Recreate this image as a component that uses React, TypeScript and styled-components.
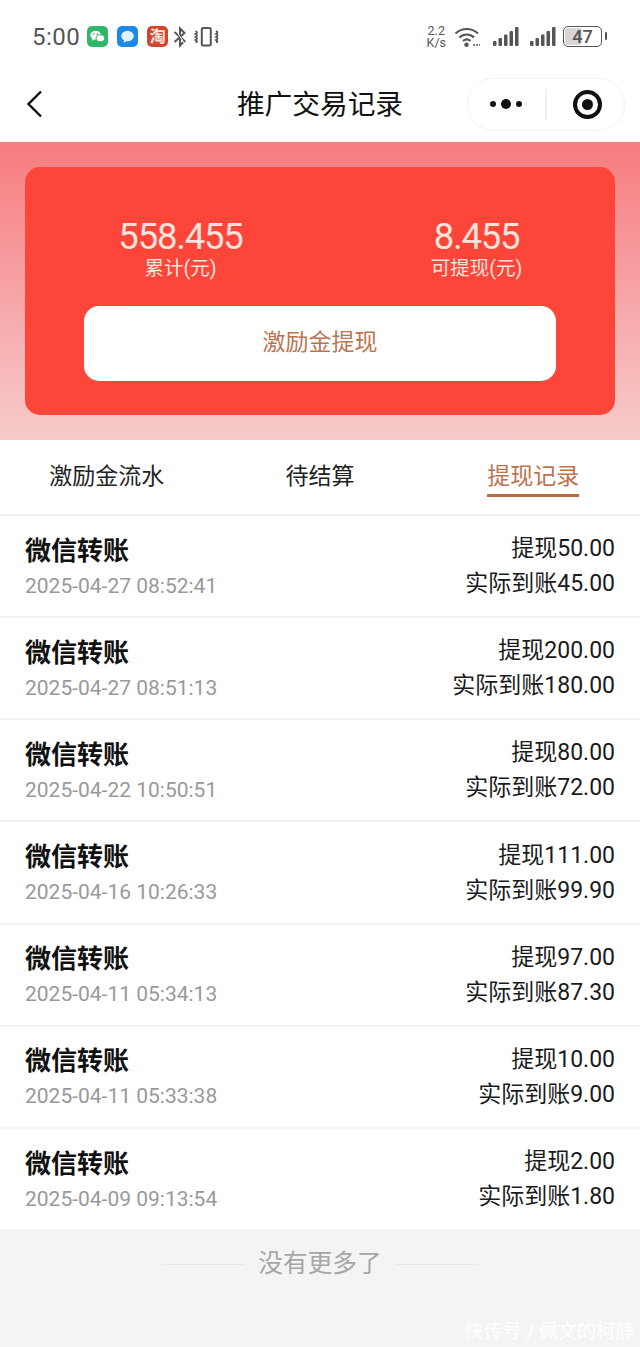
import styled, { createGlobalStyle } from 'styled-components';

const records = [
  { time: '2025-04-27 08:52:41', amount: '50.00', received: '45.00' },
  { time: '2025-04-27 08:51:13', amount: '200.00', received: '180.00' },
  { time: '2025-04-22 10:50:51', amount: '80.00', received: '72.00' },
  { time: '2025-04-16 10:26:33', amount: '111.00', received: '99.90' },
  { time: '2025-04-11 05:34:13', amount: '97.00', received: '87.30' },
  { time: '2025-04-11 05:33:38', amount: '10.00', received: '9.00' },
  { time: '2025-04-09 09:13:54', amount: '2.00', received: '1.80' },
];

const App = () => {
  return (
    <Page>
      <GlobalStyle />
      <StatusBar>
        <Clock>5:00</Clock>
        <AppBadges>
          <AppBadge $bg="#2fb869">
            <svg width="19" height="19" viewBox="0 0 20 20">
              <ellipse cx="8" cy="8.5" rx="5.6" ry="4.6" fill="#fff" />
              <path d="M5 12l-1 2.4 3-1.4z" fill="#fff" />
              <ellipse cx="13" cy="11.8" rx="4.4" ry="3.6" fill="#fff" stroke="#2fb869" strokeWidth="1" />
              <circle cx="6.2" cy="7.4" r=".9" fill="#2fb869" />
              <circle cx="9.8" cy="7.4" r=".9" fill="#2fb869" />
            </svg>
          </AppBadge>
          <AppBadge $bg="#1e88e5">
            <svg width="19" height="19" viewBox="0 0 20 20">
              <ellipse cx="10" cy="9.5" rx="6.6" ry="5.6" fill="#dff1fb" />
              <path d="M6.5 13.5l-.6 3 3.4-1.8z" fill="#dff1fb" />
            </svg>
          </AppBadge>
          <AppBadge $bg="#d0452c">
            <TaoGlyph>淘</TaoGlyph>
          </AppBadge>
        </AppBadges>
        <StatusIcons>
          <svg width="14" height="22" viewBox="0 0 14 22" fill="none" stroke="#555" strokeWidth="2">
            <path d="M1.500 6l10 9-4.500 4.500V2.500L11.500 7l-10 9" />
            <path d="M1 1l12 19" stroke="#fff" strokeWidth="1" />
          </svg>
          <svg width="25" height="22" viewBox="0 0 25 22" fill="none" stroke="#555" strokeWidth="1.800">
            <rect x="7.800" y="2" width="9" height="17.500" rx="1.500" strokeWidth="2" />
            <path d="M1.500 5c2 1 2 2 0 3 2 1 2 2 0 3 2 1 2 2 0 3 2 1 2 2 0 2M22 5c2 1 2 2 0 3 2 1 2 2 0 3 2 1 2 2 0 3 2 1 2 2 0 2" />
          </svg>
        </StatusIcons>
        <Spacer />
        <SystemIcons>
          <NetSpeed>
            <span>2.2</span>
            <span>K/s</span>
          </NetSpeed>
          <svg width="28" height="22" viewBox="0 0 28 22" fill="none" stroke="#555" strokeWidth="2.200">
            <path d="M1.500 7.500c6.500-6 16-6 22.500 0M5.500 11.500c4.300-4 10.200-4 14.500 0M9 15c2.300-2 5.200-2 7.500 0" />
            <circle cx="12.500" cy="18.700" r="2.200" fill="#555" stroke="none" />
            <path d="M19 19h7" strokeWidth="1.500" strokeDasharray="2 1" />
          </svg>
          <SignalBars />
          <SignalBars />
          <Battery>
            <BatteryFill />
            <BatteryLabel>47</BatteryLabel>
            <BatteryCap />
          </Battery>
        </SystemIcons>
      </StatusBar>

      <NavBar>
        <BackButton>
          <svg width="20" height="30" viewBox="0 0 20 30" fill="none" stroke="#111" strokeWidth="2.400">
            <path d="M16 2.500L3.500 15 16 27.500" />
          </svg>
        </BackButton>
        <NavTitle>推广交易记录</NavTitle>
        <Capsule>
          <MoreDots>
            <Dot $size={6} />
            <Dot $size={10} />
            <Dot $size={6} />
          </MoreDots>
          <CapsuleDivider />
          <CloseTarget>
            <CloseCore />
          </CloseTarget>
        </Capsule>
      </NavBar>

      <Hero>
        <Card>
          <Stats>
            <Stat>
              <StatValue>558.455</StatValue>
              <StatLabel>累计(元)</StatLabel>
            </Stat>
            <Stat>
              <StatValue>8.455</StatValue>
              <StatLabel>可提现(元)</StatLabel>
            </Stat>
          </Stats>
          <WithdrawButton>激励金提现</WithdrawButton>
        </Card>
      </Hero>

      <Tabs>
        <TabCell>
          <Tab>激励金流水</Tab>
        </TabCell>
        <TabCell>
          <Tab>待结算</Tab>
        </TabCell>
        <TabCell>
          <Tab $active>提现记录</Tab>
        </TabCell>
      </Tabs>

      <List>
        {records.map((record) => (
          <Row key={record.time}>
            <div>
              <RowTitle>微信转账</RowTitle>
              <RowTime>{record.time}</RowTime>
            </div>
            <Amounts>
              <div>提现{record.amount}</div>
              <div>实际到账{record.received}</div>
            </Amounts>
          </Row>
        ))}
      </List>

      <Footer>
        <EndNote>
          <EndLine />
          <EndText>没有更多了</EndText>
          <EndLine />
        </EndNote>
        <Watermark>快传号 / 佩文的柯静</Watermark>
      </Footer>
    </Page>
  );
};

const SignalBars = () => (
  <svg width="26" height="22" viewBox="0 0 26 22" fill="#555">
    <rect x="0" y="15" width="3.500" height="5" rx="1" />
    <rect x="5.500" y="12" width="3.500" height="8" rx="1" />
    <rect x="11" y="8.500" width="3.500" height="11.500" rx="1" />
    <rect x="16.500" y="5" width="3.500" height="15" rx="1" />
    <rect x="22" y="1" width="3.500" height="19" rx="1" />
  </svg>
);

const GlobalStyle = createGlobalStyle`
  html, body {
    margin: 0;
    padding: 0;
    background: #fff;
  }
  * {
    box-sizing: border-box;
  }
`;

const Page = styled.div`
  width: 640px;
  height: 1347px;
  overflow: hidden;
  display: flex;
  flex-direction: column;
  background: #fff;
  font-family: Roboto, "Noto Sans CJK SC", sans-serif;
  color: #111;
`;

const StatusBar = styled.div`
  height: 70px;
  padding: 3px 38px 0 32px;
  display: flex;
  align-items: center;
  gap: 5px;
`;
const Clock = styled.div`
  font-size: 24px;
  color: #555;
  letter-spacing: 0.5px;
`;
const AppBadges = styled.div`
  display: flex;
  gap: 9px;
  margin-left: 2px;
`;
const AppBadge = styled.div<{ $bg: string }>`
  width: 21px;
  height: 21px;
  border-radius: 5px;
  background: ${(p) => p.$bg};
  display: flex;
  align-items: center;
  justify-content: center;
`;
const TaoGlyph = styled.span`
  font-size: 16px;
  line-height: 1;
  font-weight: 700;
  color: #fbe6dc;
`;
const StatusIcons = styled.div`
  display: flex;
  align-items: center;
  gap: 7px;
`;
const Spacer = styled.div`
  flex: 1;
`;
const SystemIcons = styled.div`
  display: flex;
  align-items: center;
  gap: 11px;
`;
const NetSpeed = styled.div`
  display: flex;
  flex-direction: column;
  align-items: center;
  font-size: 12.5px;
  line-height: 12px;
  color: #555;
  margin-right: -3px;
`;
const Battery = styled.div`
  position: relative;
  width: 39px;
  height: 21px;
  margin-left: -4px;
  border: 1.5px solid #555;
  border-radius: 5px;
  display: flex;
  align-items: center;
  justify-content: center;
`;
const BatteryFill = styled.div`
  position: absolute;
  left: 1px;
  top: 1px;
  bottom: 1px;
  width: 47%;
  border-radius: 3px;
  background: #d6d6d6;
`;
const BatteryLabel = styled.span`
  position: relative;
  font-size: 18px;
  font-weight: 500;
  color: #555;
`;
const BatteryCap = styled.div`
  position: absolute;
  right: -6px;
  top: 5px;
  width: 2.5px;
  height: 8px;
  border-radius: 1px;
  background: #555;
`;

const NavBar = styled.div`
  position: relative;
  height: 72px;
  padding: 0 15px 4px 25px;
  display: flex;
  align-items: center;
  justify-content: space-between;
`;
const BackButton = styled.div`
  display: flex;
  align-items: center;
`;
const NavTitle = styled.div`
  position: absolute;
  left: 0;
  right: 0;
  bottom: 19px;
  text-align: center;
  font-size: 27.7px;
  line-height: 36px;
  pointer-events: none;
`;
const Capsule = styled.div`
  width: 158px;
  height: 53px;
  border: 1.5px solid #f2f2f2;
  border-radius: 27px;
  display: flex;
  align-items: center;
  background: #fff;
`;
const MoreDots = styled.div`
  width: 77px;
  padding-right: 2px;
  display: flex;
  align-items: center;
  justify-content: center;
  gap: 5px;
`;
const Dot = styled.span<{ $size: number }>`
  width: ${(p) => p.$size}px;
  height: ${(p) => p.$size}px;
  border-radius: 50%;
  background: #111;
`;
const CapsuleDivider = styled.div`
  width: 1.5px;
  height: 31px;
  background: #eee;
`;
const CloseTarget = styled.div`
  width: 29px;
  height: 29px;
  margin-left: 26px;
  border: 4px solid #111;
  border-radius: 50%;
  display: flex;
  align-items: center;
  justify-content: center;
`;
const CloseCore = styled.div`
  width: 11px;
  height: 11px;
  border-radius: 50%;
  background: #111;
`;

const Hero = styled.div`
  height: 298px;
  padding: 25px;
  background: linear-gradient(180deg, #f77c80 0%, #f7cbcb 100%);
`;
const Card = styled.div`
  height: 248px;
  padding: 50px 59px 34px;
  border-radius: 15px;
  background: #fe453a;
  display: flex;
  flex-direction: column;
  justify-content: space-between;
`;
const Stats = styled.div`
  display: flex;
  justify-content: space-between;
  padding: 0 17px 0 34px;
`;
const Stat = styled.div`
  width: 125px;
  display: flex;
  flex-direction: column;
  align-items: center;
  color: #fbe4dc;
`;
const StatValue = styled.div`
  font-size: 36.5px;
  line-height: 40px;
  letter-spacing: -1.2px;
`;
const StatLabel = styled.div`
  font-size: 19.5px;
  line-height: 24px;
  white-space: nowrap;
`;
const WithdrawButton = styled.div`
  height: 75px;
  padding-bottom: 7px;
  border-radius: 15px;
  background: #fff;
  color: #bd7350;
  font-size: 23px;
  display: flex;
  align-items: center;
  justify-content: center;
`;

const Tabs = styled.div`
  height: 76px;
  padding-top: 14px;
  display: grid;
  grid-template-columns: repeat(3, 1fr);
  border-bottom: 2px solid #f1f1f1;
`;
const TabCell = styled.div`
  display: flex;
  justify-content: center;
`;
const Tab = styled.div<{ $active?: boolean }>`
  height: 43px;
  padding-top: 7px;
  font-size: 23px;
  line-height: 32px;
  color: ${(p) => (p.$active ? '#bd7350' : '#222')};
  border-bottom: ${(p) => (p.$active ? '3px solid #bd6b45' : 'none')};
`;

const List = styled.div`
  display: flex;
  flex-direction: column;
`;
const Row = styled.div`
  height: 102.17px;
  padding: 2px 25px 0;
  display: flex;
  align-items: center;
  justify-content: space-between;
  border-bottom: 2px solid #f3f3f3;
`;
const RowTitle = styled.div`
  font-size: 26px;
  line-height: 34px;
  font-weight: 700;
  color: #111;
`;
const RowTime = styled.div`
  margin-top: 3px;
  font-size: 21px;
  line-height: 30px;
  color: #999;
`;
const Amounts = styled.div`
  padding-bottom: 2px;
  text-align: right;
  font-size: 23px;
  line-height: 35px;
  color: #1a1a1a;
`;

const Footer = styled.div`
  position: relative;
  flex: 1;
  padding-top: 16px;
  background: #f4f4f4;
`;
const EndNote = styled.div`
  display: flex;
  align-items: center;
  justify-content: center;
  gap: 15px;
`;
const EndLine = styled.div`
  width: 82px;
  height: 1px;
  background: #e6e6e6;
`;
const EndText = styled.div`
  font-size: 24.7px;
  line-height: 34px;
  color: #a6a6a6;
`;
const Watermark = styled.div`
  position: absolute;
  right: 6px;
  bottom: 2px;
  font-size: 19px;
  line-height: 26px;
  color: #fff;
`;

export default App;
